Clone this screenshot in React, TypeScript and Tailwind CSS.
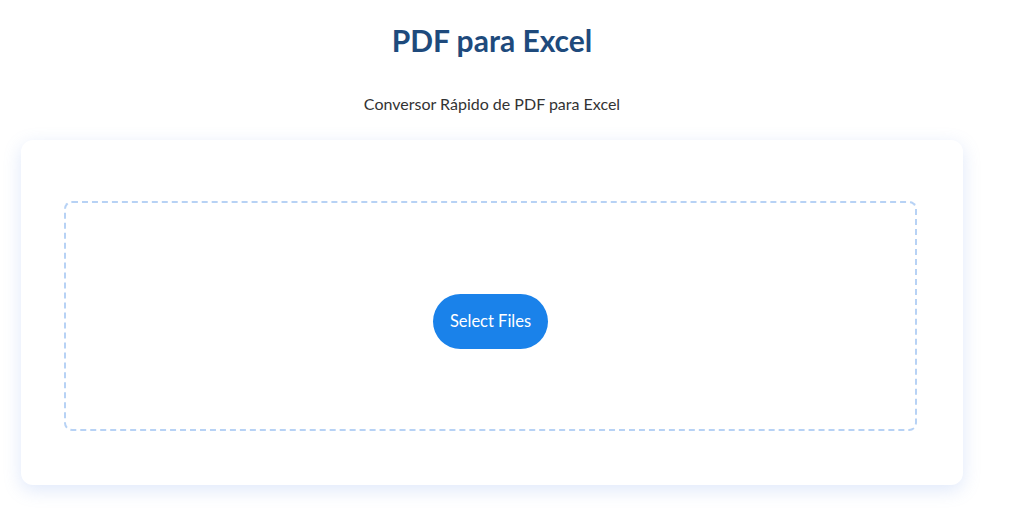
export default function App() {
  return (
    <div className="w-[1024px] h-[512px] bg-white overflow-hidden" style={{ fontFamily: 'Lato, sans-serif' }}>
      <div className="flex flex-col items-center w-[942px] ml-[21px]">
        <h1 className="mt-[20px] text-[30px] leading-[40px] font-bold text-[#1e4a7c]">PDF para Excel</h1>
        <p className="mt-[33px] text-[16px] leading-[22px] text-[#333]">Conversor Rápido de PDF para Excel</p>
      </div>
      <div className="mt-[25px] ml-[21px] w-[942px] h-[345px] bg-white rounded-xl shadow-[0_5px_18px_rgba(110,150,230,0.22)] pt-[61px] pl-[43px] pr-[46px]">
        <div className="h-[230px] rounded-lg border-2 border-dashed border-[#b7d2f5] flex items-center justify-center">
          <button className="w-[115px] h-[55px] rounded-full bg-[#1a82ea] text-white text-[16.5px] mt-[10px]">Select Files</button>
        </div>
      </div>
    </div>
  );
}
